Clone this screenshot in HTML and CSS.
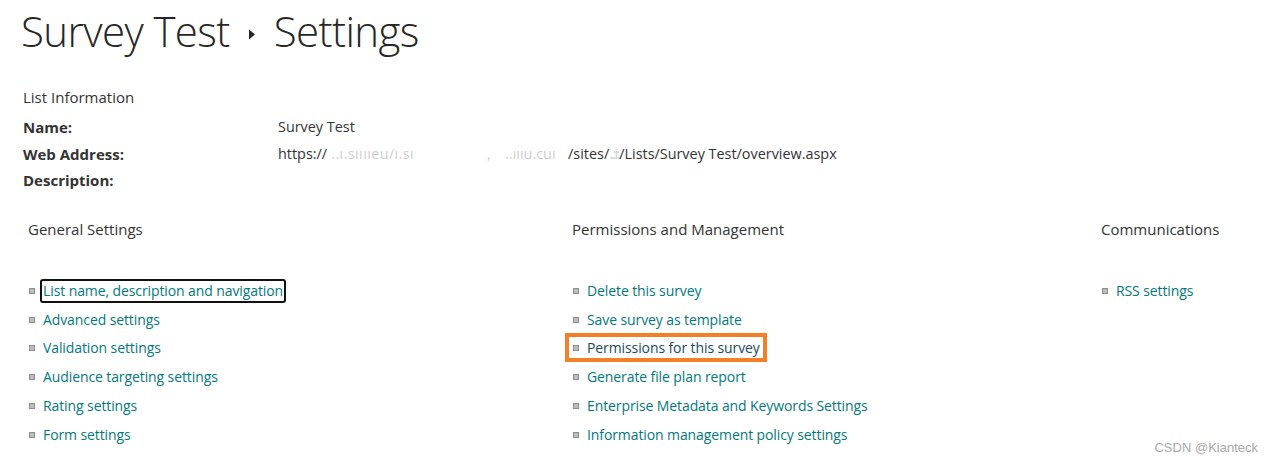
FILE: index.html
```html
<!DOCTYPE html>
<html lang="en">
<head>
<meta charset="utf-8">
<title>Survey Test - Settings</title>
<link rel="stylesheet" href="styles.css">
</head>
<body>
<div class="page">
  <h1 class="title"><span>Survey Test</span><svg class="crumb" width="8" height="11" viewBox="0 0 8 11"><path d="M1 0.5 L7 5.5 L1 10.5 Z" fill="#262626"/></svg><span>Settings</span></h1>

  <section class="info">
    <div class="info-head">List Information</div>
    <div class="info-row"><div class="label">Name:</div><div class="value">Survey Test</div></div>
    <div class="info-row"><div class="label">Web Address:</div><div class="value">https://<span class="blur blur-a"> ..ı.sııııeu/ı.sı</span><span class="blur blur-g">,</span><span class="blur blur-c">..ıııu.cuı</span>/sites/<span class="blur blur-b">..:i:.</span>/Lists/Survey Test/overview.aspx</div></div>
    <div class="info-row"><div class="label">Description:</div><div class="value"></div></div>
  </section>

  <section class="cols">
    <div class="col">
      <h3 class="col-head">General Settings</h3>
      <ul class="links">
        <li><a class="focused" href="#">List name, description and navigation</a></li>
        <li><a href="#">Advanced settings</a></li>
        <li><a href="#">Validation settings</a></li>
        <li><a href="#">Audience targeting settings</a></li>
        <li><a href="#">Rating settings</a></li>
        <li><a href="#">Form settings</a></li>
      </ul>
    </div>
    <div class="col">
      <h3 class="col-head">Permissions and Management</h3>
      <ul class="links">
        <li><a href="#">Delete this survey</a></li>
        <li><a href="#">Save survey as template</a></li>
        <li class="highlight"><a href="#">Permissions for this survey</a></li>
        <li><a href="#">Generate file plan report</a></li>
        <li><a href="#">Enterprise Metadata and Keywords Settings</a></li>
        <li><a href="#">Information management policy settings</a></li>
      </ul>
    </div>
    <div class="col">
      <h3 class="col-head">Communications</h3>
      <ul class="links">
        <li><a href="#">RSS settings</a></li>
      </ul>
    </div>
  </section>
  <div class="watermark">CSDN @Kianteck</div>
</div>
</body>
</html>
```

FILE: styles.css
```css
html, body {
  margin: 0;
  padding: 0;
  background: #ffffff;
}
body {
  font-family: "Open Sans", "Noto Sans", sans-serif;
  color: #333333;
  font-size: 14px;
}
.page {
  position: relative;
  width: 1274px;
  height: 462px;
  padding-left: 21px;
  box-sizing: border-box;
  overflow: hidden;
}
.title {
  margin: 0;
  height: 62px;
  font-weight: 300;
  font-size: 42px;
  line-height: 56px;
  color: #262626;
  display: flex;
  align-items: center;
  gap: 18px;
  letter-spacing: -0.6px;
}
.crumb {
  margin-top: 6px;
}
.info {
  padding-top: 23px;
  padding-left: 2px;
}
.info-head {
  font-size: 15px;
  line-height: 24px;
  color: #333333;
  margin-bottom: 8px;
}
.info-row {
  display: grid;
  grid-template-columns: 255px 1fr;
  height: 26.5px;
  line-height: 20px;
}
.label {
  font-weight: 700;
  font-size: 15px;
  color: #333333;
}
.value {
  color: #333333;
  font-size: 14.4px;
  white-space: nowrap;
}
.blur {
  display: inline-block;
  color: #cfcfcf;
  white-space: pre;
  vertical-align: top;
}
.blur-a {
  width: 160px;
  letter-spacing: 0.4px;
}
.blur-g {
  width: 18px;
}
.blur-c {
  width: 63px;
}
.blur-b {
  width: 10px;
  letter-spacing: -2px;
}
.cols {
  display: grid;
  grid-template-columns: 544px 529px 1fr;
  padding-left: 7px;
  margin-top: 21px;
}
.col-head {
  margin: 0;
  font-weight: 400;
  font-size: 15px;
  line-height: 22px;
  color: #333333;
  height: 59px;
}
.links {
  list-style: none;
  margin: 0;
  padding: 0;
}
.links li {
  height: 28.8px;
  display: flex;
  align-items: center;
  position: relative;
}
.links li::before {
  content: "";
  width: 4px;
  height: 4px;
  border: 1px solid #8c8c8c;
  background: #bdbdbd;
  margin-left: 1px;
  margin-right: 8px;
  flex: none;
}
.links a {
  color: #03787c;
  text-decoration: none;
  padding: 1px 1px;
  border: 2px solid transparent;
  border-radius: 3px;
  margin-left: -3px;
  line-height: 18px;
  letter-spacing: -0.1px;
}
.links a.focused {
  border-color: #111111;
}
.links li.highlight::after {
  content: "";
  position: absolute;
  left: -7px;
  top: -1px;
  width: 194px;
  height: 21px;
  border: 4px solid #f47f24;
}
.links li.highlight a {
  color: #1b4a5c;
}
.watermark {
  position: absolute;
  right: 16px;
  bottom: 7px;
  font-family: "Liberation Sans", Arial, sans-serif;
  font-size: 13px;
  color: #a9a9a9;
}
```
